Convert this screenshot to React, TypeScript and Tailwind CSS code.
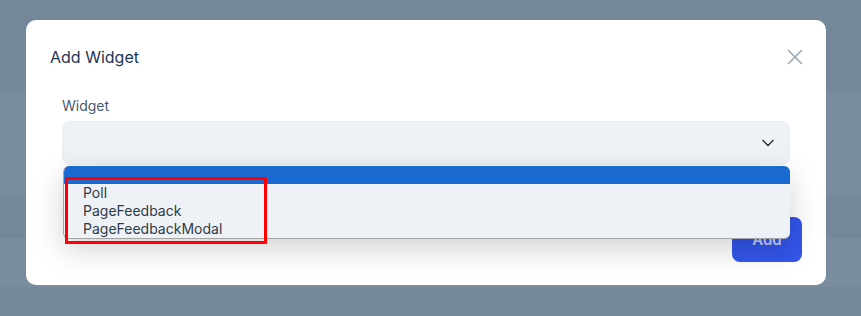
import { X, ChevronDown } from "lucide-react";

const options = ["Poll", "PageFeedback", "PageFeedbackModal"];

export default function App() {
  return (
    <div className="relative h-[316px] w-[861px] overflow-hidden bg-[#74889a] font-['Inter',sans-serif]">
      {/* page behind the overlay */}
      <div className="flex flex-col">
        <div className="h-[93px] bg-[#74889a]" />
        <div className="h-[102px] bg-[#7a8d9e]" />
        <div className="h-[43px] bg-[#74889a]" />
        <div className="h-[49px] bg-[#7a8d9e]" />
      </div>

      {/* modal */}
      <div className="absolute left-[26px] top-[20px] flex h-[265px] w-[800px] flex-col rounded-[10px] bg-white">
        <div className="flex items-center justify-between pl-6 pr-[18px] pt-[24px]">
          <h2 className="text-[16px] leading-[22px] text-[#1d3452]">Add Widget</h2>
          <X className="h-[26px] w-[26px] text-[#9aa8b5]" strokeWidth={1.4} />
        </div>

        <div className="px-9 pt-[27px]">
          <label className="block text-[14px] leading-[18px] text-[#4a5b6e]">Widget</label>
          <div className="mt-[6px] flex h-[44px] items-center justify-end rounded-lg border border-[#e8edf2] bg-[#eef2f6] pr-[11px]">
            <ChevronDown className="h-[20px] w-[20px] text-[#333]" strokeWidth={1.8} />
          </div>
        </div>

        <div className="flex justify-end px-6 pt-[52px]">
          <button className="h-[45px] w-[70px] rounded-lg bg-[#3355ea] pt-[2px] text-[15px] font-semibold text-[#c9d1f3]">
            Add
          </button>
        </div>
      </div>

      {/* open listbox */}
      <div className="absolute left-[63px] top-[166px] w-[727px] overflow-hidden rounded-[6px] border-b border-l border-[#a5a5a5] bg-[#eef2f6] shadow-[0_10px_30px_rgba(0,0,0,0.18)]">
        <div className="h-[18px] bg-[#1b6ad2]" />
        <ul className="pl-[19px] text-[14px] leading-[18px] text-[#2f3b48]">
          {options.map((o) => (
            <li key={o}>{o}</li>
          ))}
        </ul>
      </div>

      {/* annotation box */}
      <div className="absolute left-[65px] top-[177px] h-[67px] w-[202px] border-[3px] border-[#ff0000]" />
    </div>
  );
}
